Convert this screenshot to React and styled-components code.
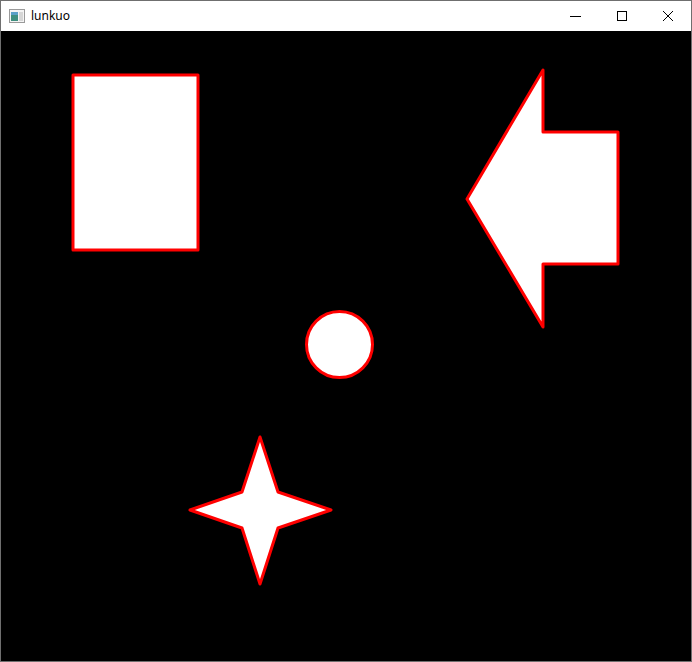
import React from 'react';
import styled, { createGlobalStyle } from 'styled-components';

const Global = createGlobalStyle`
    html, body {
        margin: 0;
        padding: 0;
        background: #ffffff;
    }
`

const Window = styled.div`
    display: flex;
    flex-direction: column;
    width: 692px;
    height: 662px;
    box-sizing: border-box;
    border: 1px solid #6f6f6f;
    background: #ffffff;
`

const TitleBar = styled.div`
    display: flex;
    align-items: center;
    height: 30px;
    flex-shrink: 0;
    background: #ffffff;
`

const AppIcon = styled.div`
    display: flex;
    width: 29px;
    height: 30px;
    align-items: center;
    justify-content: center;
    padding-left: 1px;
`

const Title = styled.div`
    flex: 1;
    font-family: "Noto Sans", "Liberation Sans", sans-serif;
    font-size: 12px;
    color: #000000;
    padding-bottom: 1px;
`

const CaptionButton = styled.div`
    display: flex;
    width: 46px;
    height: 30px;
    align-items: center;
    justify-content: center;
`

const Canvas = styled.div`
    flex: 1;
    background: #000000;
    overflow: hidden;
`

const Board = styled.svg`
    display: block;
    width: 690px;
    height: 629px;
`

const line = { stroke: '#ff0000', strokeWidth: 3, fill: '#ffffff', strokeLinejoin: 'round' }

export default function App () {
    return (
        <>
            <Global />
            <Window>
                <TitleBar>
                    <AppIcon>
                        <svg width="16" height="14" viewBox="0 0 16 14">
                            <rect x="0.5" y="0.5" width="15" height="13" fill="#f4f4f4" stroke="#9a9a9a" />
                            <rect x="2" y="3" width="7" height="9" fill="#3f8f7f" />
                            <rect x="2" y="3" width="7" height="3" fill="#5aa0c8" />
                            <rect x="10" y="3" width="4" height="9" fill="#d6d6d6" />
                        </svg>
                    </AppIcon>
                    <Title>lunkuo</Title>
                    <CaptionButton>
                        <svg width="12" height="12" viewBox="0 0 12 12">
                            <line x1="0" y1="6.5" x2="11" y2="6.5" stroke="#000" strokeWidth="1" />
                        </svg>
                    </CaptionButton>
                    <CaptionButton>
                        <svg width="12" height="12" viewBox="0 0 12 12">
                            <rect x="1.5" y="1.5" width="9" height="9" fill="none" stroke="#000" strokeWidth="1" />
                        </svg>
                    </CaptionButton>
                    <CaptionButton>
                        <svg width="12" height="12" viewBox="0 0 12 12">
                            <path d="M1 1 L11 11 M11 1 L1 11" stroke="#000" strokeWidth="1" />
                        </svg>
                    </CaptionButton>
                </TitleBar>
                <Canvas>
                    <Board viewBox="1 31 690 629">
                        <rect x="73" y="75" width="125" height="175" {...line} />
                        <polygon points="543,70 543,132 618,132 618,264 543,264 543,327 467,199" {...line} />
                        <circle cx="339.5" cy="344.5" r="33" {...line} />
                        <polygon points="260,437 278,492 331,510 278,528 260,584 242,528 190,510 242,492" {...line} />
                    </Board>
                </Canvas>
            </Window>
        </>
    )
}
